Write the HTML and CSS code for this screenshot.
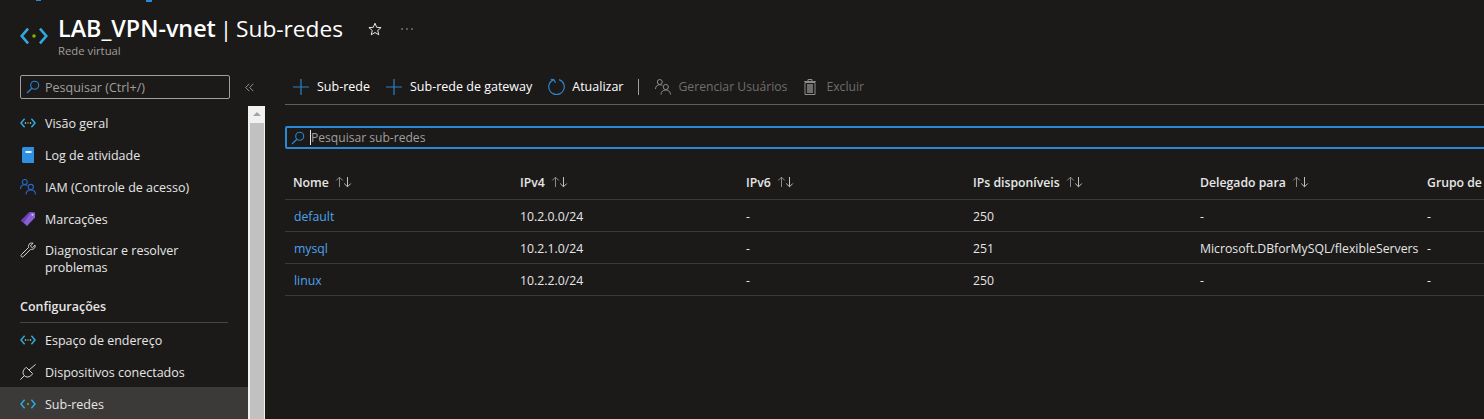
FILE: index.html
```html
<!DOCTYPE html>
<html lang="pt-BR">
<head>
<meta charset="utf-8">
<title>LAB_VPN-vnet | Sub-redes</title>
<link rel="stylesheet" href="styles.css">
</head>
<body>
<svg class="defs" width="0" height="0" aria-hidden="true">
  <defs>
    <symbol id="vnet" viewBox="0 0 16 10">
      <path d="M4.600 .8 1 5l3.600 4.200" fill="none" stroke="#2fa8e0" stroke-width="1.500"/>
      <path d="M11.400 .8 15 5l-3.600 4.200" fill="none" stroke="#2fa8e0" stroke-width="1.500"/>
      <circle cx="8" cy="5" r="1" fill="#7fba00"/>
    </symbol>
    <symbol id="vnet-dots" viewBox="0 0 16 10">
      <path d="M4.600 .8 1 5l3.600 4.200" fill="none" stroke="#2fa8e0" stroke-width="1.500"/>
      <path d="M11.400 .8 15 5l-3.600 4.200" fill="none" stroke="#2fa8e0" stroke-width="1.500"/>
      <circle cx="5.500" cy="5" r=".8" fill="#d8d8d8"/>
      <circle cx="8" cy="5" r=".8" fill="#7fba00"/>
      <circle cx="10.500" cy="5" r=".8" fill="#d8d8d8"/>
    </symbol>
    <symbol id="find" viewBox="0 0 14 14">
      <circle cx="8.700" cy="5.300" r="4" fill="none" stroke="#2a85d0" stroke-width="1.100"/>
      <path d="M5.800 8.200 1 13" fill="none" stroke="#2a85d0" stroke-width="1.300"/>
    </symbol>
    <symbol id="plus" viewBox="0 0 16 16">
      <path d="M8 0v16M0 8h16" fill="none" stroke="#2d80c4" stroke-width="1.200"/>
    </symbol>
    <symbol id="sort" viewBox="0 0 17 12">
      <path d="M4.500 11V1.200M1.200 4.500 4.500 1.200 7.800 4.500" fill="none" stroke="#8a8a8a" stroke-width="1"/>
      <path d="M12.500 1v9.800M9.200 7.500l3.300 3.300 3.300-3.300" fill="none" stroke="#c0c0c0" stroke-width="1"/>
    </symbol>
  </defs>
</svg>
<div class="page">
  <div class="crumbs"><span class="crumb-a"></span><span class="crumb-b"></span></div>
  <header class="title-bar">
    <svg class="title-icon"><use href="#vnet"/></svg>
    <div class="title-text">
      <h1 class="title"><b>LAB_VPN-vnet</b> | Sub-redes</h1>
      <p class="subtitle">Rede virtual</p>
    </div>
    <svg class="star" viewBox="0 0 14 14"><path d="M7 1.200 8.700 5.300l4.400.3-3.400 2.900 1.100 4.300L7 10.500l-3.800 2.300 1.100-4.300L.9 5.600l4.400-.3z" fill="none" stroke="#e6e6e6" stroke-width="1"/></svg>
    <svg class="more" viewBox="0 0 12 2"><circle cx="1" cy="1" r=".8" fill="#a8a8a8"/><circle cx="6" cy="1" r=".8" fill="#a8a8a8"/><circle cx="11" cy="1" r=".8" fill="#a8a8a8"/></svg>
  </header>
  <div class="body">
    <aside class="sidebar">
      <div class="side-top">
        <label class="side-search">
          <svg class="find-icon"><use href="#find"/></svg>
          <span>Pesquisar (Ctrl+/)</span>
        </label>
        <svg class="collapse" viewBox="0 0 9 9"><path d="M4.300.8.700 4.500l3.600 3.700M8.300.8 4.700 4.500l3.600 3.700" fill="none" stroke="#a19f9d" stroke-width=".9"/></svg>
      </div>
      <div class="side-scroll">
        <nav class="menu">
          <a class="item"><svg class="item-icon vnet-small"><use href="#vnet-dots"/></svg><span>Visão geral</span></a>
          <a class="item"><svg class="item-icon" viewBox="0 0 14 16"><path d="M1 1.500A1.500 1.500 0 0 1 2.500 0H13v16H2.500A1.500 1.500 0 0 1 1 14.500z" fill="#2f8fe0"/><rect x="4.500" y="4" width="6" height="2" fill="#e8f2fb"/></svg><span>Log de atividade</span></a>
          <a class="item"><svg class="item-icon" viewBox="0 0 16 16"><g fill="none" stroke="#2468c8" stroke-width="1.100"><circle cx="4.800" cy="3" r="2.500"/><path d="M.5 10c0-2.800 2-4.300 4.300-4.300 1 0 1.800.3 2.500.8"/><circle cx="10.800" cy="8" r="2.600"/><path d="M6 15.500c0-2.800 2-4.500 4.800-4.500s4.700 1.700 4.700 4.500"/></g></svg><span>IAM (Controle de acesso)</span></a>
          <a class="item"><svg class="item-icon" viewBox="0 0 16 16"><path d="M9.500 1 15 1.500 15 6.500 7 15 1 9.500z" fill="#8a5fd6"/><path d="M1 9.500 9.500 1 11 1.200 3.500 12z" fill="#6a3fb5"/><circle cx="12.500" cy="3.700" r="1" fill="#d8c8f4"/></svg><span>Marcações</span></a>
          <a class="item item-tall"><svg class="item-icon" viewBox="0 0 16 16"><path d="M15 3.200 12.300 5.800 10.400 4 13 1.200c-2-.8-4.300.4-4.500 2.600 0 .6 0 1 .2 1.500L1.500 12.500c-.7.8-.7 1.500-.1 2.100s1.400.6 2-.1l7.200-7.200c2.600.8 5.200-1.500 4.400-4.100z" fill="none" stroke="#d8d8d8" stroke-width="1"/></svg><span>Diagnosticar e resolver problemas</span></a>
        </nav>
        <h2 class="section">Configurações</h2>
        <nav class="menu menu-lower">
          <a class="item"><svg class="item-icon vnet-small"><use href="#vnet-dots"/></svg><span>Espaço de endereço</span></a>
          <a class="item"><svg class="item-icon" viewBox="0 0 16 16"><g fill="none" stroke="#d8d8d8" stroke-width="1"><path d="M6.500 3.500 12.500 9.500c-.5 1.500-2.500 3.500-5 3.500C5 13 3 11 3 8.500 3 6 5 4 6.500 3.500z"/><path d="M4.500 11.500.4 15.600M9 6 15.600.4"/></g></svg><span>Dispositivos conectados</span></a>
          <a class="item active"><svg class="item-icon vnet-small"><use href="#vnet"/></svg><span>Sub-redes</span></a>
        </nav>
      </div>
      <div class="scrollbar">
        <span class="scroll-arrow"></span>
        <span class="scroll-thumb"></span>
      </div>
    </aside>
    <main class="content">
      <div class="toolbar">
        <button class="tool"><svg class="plus"><use href="#plus"/></svg>Sub-rede</button>
        <button class="tool"><svg class="plus"><use href="#plus"/></svg>Sub-rede de gateway</button>
        <button class="tool"><svg class="refresh" viewBox="0 0 16 16"><path d="M5.500 1.500a7.300 7.300 0 1 0 5 0M5.500 1.500 7 4.500M5.500 1.500 2.500 1.200" fill="none" stroke="#2d86d0" stroke-width="1.100"/></svg>Atualizar</button>
        <span class="tool-sep"></span>
        <button class="tool disabled"><svg class="users" viewBox="0 0 16 16"><g fill="none" stroke="#8c8c8c" stroke-width="1"><circle cx="4.800" cy="3" r="2.500"/><path d="M.5 10c0-2.800 2-4.300 4.300-4.300 1 0 1.800.3 2.500.8"/><circle cx="10.800" cy="8" r="2.600"/><path d="M6 15.500c0-2.800 2-4.500 4.800-4.500s4.700 1.700 4.700 4.500"/></g></svg>Gerenciar Usuários</button>
        <button class="tool disabled"><svg class="trash" viewBox="0 0 12 16"><path d="M1 3.500h10V15.500H1zM.2 2.500h11.600M4 2.500V.5h4v2" fill="none" stroke="#8c8c8c"/><rect x="3" y="5" width="6" height="9" fill="#6e6e6e"/></svg>Excluir</button>
      </div>
      <div class="filter">
        <svg class="find-icon"><use href="#find"/></svg>
        <span class="caret"></span>
        <span>Pesquisar sub-redes</span>
      </div>
      <div class="table">
        <div class="row head">
          <span class="cell c1">Nome<svg class="sort"><use href="#sort"/></svg></span>
          <span class="cell c2">IPv4<svg class="sort"><use href="#sort"/></svg></span>
          <span class="cell c3">IPv6<svg class="sort"><use href="#sort"/></svg></span>
          <span class="cell c4">IPs disponíveis<svg class="sort"><use href="#sort"/></svg></span>
          <span class="cell c5">Delegado para<svg class="sort"><use href="#sort"/></svg></span>
          <span class="cell c6">Grupo de</span>
        </div>
        <div class="row">
          <a class="cell c1 link">default</a><span class="cell c2">10.2.0.0/24</span><span class="cell c3">-</span><span class="cell c4">250</span><span class="cell c5">-</span><span class="cell c6">-</span>
        </div>
        <div class="row">
          <a class="cell c1 link">mysql</a><span class="cell c2">10.2.1.0/24</span><span class="cell c3">-</span><span class="cell c4">251</span><span class="cell c5">Microsoft.DBforMySQL/flexibleServers</span><span class="cell c6">-</span>
        </div>
        <div class="row">
          <a class="cell c1 link">linux</a><span class="cell c2">10.2.2.0/24</span><span class="cell c3">-</span><span class="cell c4">250</span><span class="cell c5">-</span><span class="cell c6">-</span>
        </div>
      </div>
    </main>
  </div>
</div>
</body>
</html>
```
FILE: styles.css
```css
* { box-sizing: border-box; }
html, body { margin: 0; height: 100%; }
body {
  background: #1b1a19;
  color: #e6e6e6;
  font-family: "Open Sans", "Noto Sans", "Liberation Sans", sans-serif;
  font-size: 12.500px;
  overflow: hidden;
}
.defs { position: absolute; }
.page { height: 419px; width: 1484px; overflow: hidden; display: flex; flex-direction: column; }

.crumbs { height: 2px; display: flex; flex: none; }
.crumb-a { width: 5px; height: 1px; margin-left: 36px; background: #2b88d8; }
.crumb-b { width: 6px; height: 2px; margin-left: 105px; background: #2b88d8; }

.title-bar { height: 64px; flex: none; display: flex; align-items: flex-start; padding: 13px 0 0 20px; }
.title-icon { width: 28px; height: 18px; margin-top: 12px; }
.title-text { margin-left: 10px; }
.title { margin: 0; font-size: 22.700px; line-height: 27px; font-weight: 400; color: #fff; white-space: nowrap; word-spacing: -2px; }
.title b { font-weight: 600; font-size: 23.300px; }
.subtitle { margin: 0; font-size: 11.300px; line-height: 17px; color: #a19f9d; }
.star { width: 14px; height: 14px; margin: 7px 0 0 25px; }
.more { width: 12px; height: 2px; margin: 13px 0 0 19px; }

.body { flex: 1; display: flex; min-height: 0; }
.sidebar { width: 265px; flex: none; position: relative; display: flex; flex-wrap: wrap; align-content: flex-start; }
.side-top { width: 265px; height: 40px; padding: 9px 0 0 20px; display: flex; align-items: flex-start; }
.side-search { width: 210px; height: 24px; border: 1px solid #a19f9d; border-radius: 2px; display: flex; align-items: center; padding-left: 5px; gap: 5px; color: #a19f9d; }
.find-icon { width: 14px; height: 14px; flex: none; }
.collapse { width: 9px; height: 9px; margin: 8px 0 0 15px; }

.side-scroll { width: 248px; padding-top: 1px; }
.menu { display: flex; flex-direction: column; }
.item { display: flex; align-items: center; height: 32px; padding-left: 20px; gap: 9px; color: #e6e6e6; }
.menu-lower .item { padding-top: 2px; }
.item-tall { height: 49px; align-items: flex-start; padding-top: 7px; line-height: 17px; }
.item-tall span { width: 160px; }
.item.active { background: #3b3a39; }
.item-icon { width: 16px; height: 16px; flex: none; }
.vnet-small { height: 10px; }
.section { margin: 14px 20px 0; padding-bottom: 7px; font-size: 12.500px; line-height: 17px; font-weight: 600; color: #e6e6e6; border-bottom: 1px solid #484644; }

.scrollbar { width: 17px; height: 313px; background: #f1f1f1; display: flex; flex-direction: column; align-items: center; }
.scroll-arrow { margin-top: 6px; border: 4px solid transparent; border-top: 0; border-bottom: 4px solid #a3a3a3; height: 4px; width: 8px; }
.scroll-thumb { width: 14px; flex: 1; margin-top: 7px; background: #c1c1c1; }

.content { flex: 1; min-width: 0; padding-left: 20px; overflow: hidden; }
.toolbar { height: 39px; display: flex; align-items: center; border-bottom: 1px solid #605e5c; padding: 7px 0 4px 8px; width: 1199px; font-size: 12.500px; }
.tool { display: flex; align-items: center; background: none; border: 0; padding: 0; margin: 0 16px 0 0; color: #fff; font: inherit; white-space: nowrap; }
.tool.disabled { color: #6f6e6d; font-size: 12.200px; margin-right: 17px; }
.plus { width: 16px; height: 16px; margin-right: 8px; }
.refresh { width: 17px; height: 17px; margin-right: 7px; }
.tool-sep { width: 1px; height: 16px; background: #a19f9d; margin: 0 16px 0 -1px; }
.users { width: 16px; height: 16px; margin-right: 7px; }
.trash { width: 12px; height: 16px; margin-right: 10px; }

.filter { margin-top: 21px; width: 1210px; height: 23px; border: 2px solid #2b88d8; border-radius: 2px; display: flex; align-items: center; padding-left: 4px; color: #a19f9d; font-size: 12.100px; }
.filter .find-icon { margin-right: 5px; }
.caret { width: 1px; height: 15px; background: #e6e6e6; }

.table { margin-top: 14px; width: 1210px; font-size: 12.250px; }
.row { display: flex; align-items: center; height: 32px; border-bottom: 1px solid #3b3a39; padding-left: 8px; padding-top: 1px; color: #e6e6e6; }
.head { height: 37px; font-weight: 600; padding-top: 2px; }
.cell { flex: none; display: flex; align-items: center; white-space: nowrap; }
.c1 { width: 227px; }
.c2 { width: 226px; }
.c3 { width: 227px; }
.c4 { width: 227px; }
.c5 { width: 227px; }
.c6 { width: 60px; }
.link { color: #4ba3ec; padding-left: 1px; }
.sort { width: 17px; height: 12px; margin-left: 6.500px; }
```
